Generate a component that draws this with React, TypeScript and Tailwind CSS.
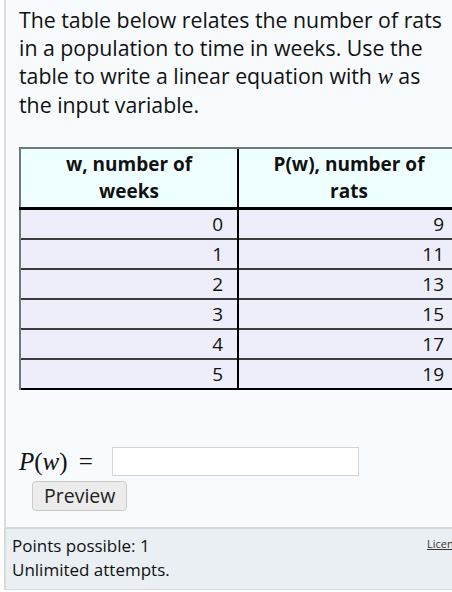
const rows = [
  [0, 9],
  [1, 11],
  [2, 13],
  [3, 15],
  [4, 17],
  [5, 19],
];

export default function App() {
  return (
    <div className="h-[592px] w-[452px] overflow-hidden bg-white font-['Open_Sans',sans-serif] text-[#111]">
      <div className="ml-[4px] flex h-[590px] w-[470px] flex-col border-b border-l-2 border-[#d5dde2]">
        {/* question */}
        <div className="flex-1 bg-[#f7fbfd] pl-[13px] pt-[6px]">
          <p className="w-[434px] text-[21.3px] leading-[28px]">
            The table below relates the number of rats in a population to time in weeks. Use the table to write a linear equation with{" "}
            <span className="font-['Liberation_Serif',serif] text-[23px] italic">w</span> as the input variable.
          </p>

          <table className="mt-[28px] w-[440px] border-collapse text-[19px]">
            <thead>
              <tr className="bg-[#efffff]">
                <th className="w-[218px] border-t-2 border-l-2 border-[#6e7a7a] px-2 py-[2px] text-center font-bold leading-[27px]">
                  w, number of
                  <br />
                  weeks
                </th>
                <th className="border-t-2 border-l-2 border-t-[#6e7a7a] border-l-black px-2 py-[2px] text-center font-bold leading-[27px]">
                  P(w), number of
                  <br />
                  rats
                </th>
              </tr>
            </thead>
            <tbody className="border-t-[3px] border-black">
              {rows.map(([w, p], i) => (
                <tr key={w} className={i === 0 ? "bg-[#eeeefa]" : "border-t-2 border-[#3c3c3c] bg-[#eeeefa]"}>
                  <td className="h-[30px] border-l-2 border-[#6e7a7a] pr-[14px] text-right leading-[28px]">{w}</td>
                  <td className="h-[30px] border-l-2 border-black pr-[15px] text-right leading-[28px]">{p}</td>
                </tr>
              ))}
              <tr>
                <td className="border-t-2 border-black p-0" />
                <td className="border-t-2 border-black p-0" />
              </tr>
            </tbody>
          </table>

          <div className="mt-[57px] flex items-center">
            <span className="font-['Liberation_Serif',serif] text-[25px] leading-[28px]">
              <i>P</i>(<i>w</i>)<span className="ml-[11px]">=</span>
            </span>
            <div className="ml-[19px] h-[29px] w-[247px] border border-[#d4d4d4] bg-white" />
          </div>
          <button className="ml-[13px] mt-[5px] h-[30px] rounded-[4px] border border-[#c8c8c8] bg-[#ececec] px-[11px] text-[19.5px] leading-[26px] text-[#222]">
            Preview
          </button>
        </div>

        {/* footer */}
        <div className="flex h-[62px] border-t-2 border-[#d3dbe0] bg-[#e9eff3] pl-[6px] pt-[5px]">
          <div className="w-[415px] text-[17px] leading-[24px]">
            <div>Points possible: 1</div>
            <div>Unlimited attempts.</div>
          </div>
          <span className="mt-[2px] text-[11px] text-[#333] underline">License</span>
        </div>
      </div>
    </div>
  );
}
